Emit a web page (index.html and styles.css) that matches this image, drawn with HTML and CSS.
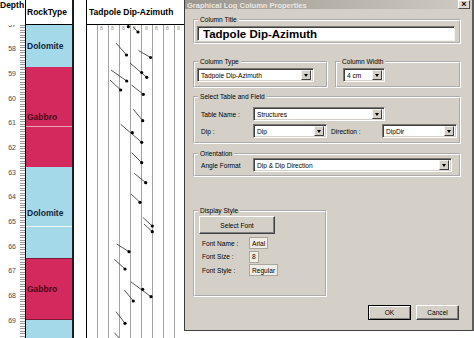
FILE: index.html
```html
<!DOCTYPE html>
<html lang="en">
  <head>
    <meta charset="utf-8" />
    <title>Graphical Log Column Properties</title>
    <link rel="stylesheet" href="styles.css">
  </head>
  <body>
    <div class="log">
      <div class="depth">
        <div class="depth-head">Depth</div>
        <div class="depth-body">
          <div class="depth-labels">
            <span>57</span><span>58</span><span>59</span><span>60</span><span>61</span>
            <span>62</span><span>63</span><span>64</span><span>65</span><span>66</span>
            <span>67</span><span>68</span><span>69</span>
          </div>
          <div class="ticks"></div>
        </div>
      </div>

      <div class="rock">
        <div class="head">RockType</div>
        <div class="unit dolomite unit-a">Dolomite</div>
        <div class="unit gabbro unit-b">Gabbro</div>
        <div class="unit dolomite unit-c">Dolomite</div>
        <div class="unit gabbro unit-d">Gabbro</div>
        <div class="unit dolomite unit-e"></div>
      </div>

      <div class="spacer"></div>

      <div class="tadpole">
        <div class="head">Tadpole Dip-Azimuth</div>
        <svg class="tads" viewBox="87 25 98 313" width="98" height="313">
          <g stroke="#a3a3a3" stroke-width="1">
            <line x1="97.5" y1="25" x2="97.5" y2="338"/>
            <line x1="108.5" y1="25" x2="108.5" y2="338"/>
            <line x1="119.5" y1="25" x2="119.5" y2="338"/>
            <line x1="130.5" y1="25" x2="130.5" y2="338"/>
            <line x1="141.5" y1="25" x2="141.5" y2="338"/>
            <line x1="152.5" y1="25" x2="152.5" y2="338"/>
            <line x1="163.5" y1="25" x2="163.5" y2="338"/>
            <line x1="174.5" y1="25" x2="174.5" y2="338"/>
          </g>
          <g class="grid-marks" fill="#8c8c8c">
            <text x="100" y="30">8</text>
            <text x="111" y="30">8</text>
            <text x="122" y="30">8</text>
            <text x="133" y="30">8</text>
            <text x="145" y="30">8</text>
            <text x="155" y="30">8</text>
            <text x="166" y="30">8</text>
            <text x="177" y="30">8</text>
          </g>
          <g stroke="#2a2a2a" stroke-width="0.8">
            <line x1="133" y1="27" x2="138" y2="32"/>
            <line x1="116" y1="43" x2="126.5" y2="55"/>
            <line x1="138.5" y1="50.5" x2="150.5" y2="57.5"/>
            <line x1="130" y1="63" x2="146.7" y2="77.3"/>
            <line x1="111" y1="70" x2="126.7" y2="81"/>
            <line x1="110" y1="80" x2="120.7" y2="90"/>
            <line x1="131.5" y1="85" x2="143.3" y2="94.3"/>
            <line x1="133.3" y1="109.3" x2="142.7" y2="120.7"/>
            <line x1="120.7" y1="124.3" x2="141.7" y2="142.3"/>
            <line x1="131.7" y1="152.7" x2="141.7" y2="162.7"/>
            <line x1="134.3" y1="173.3" x2="145.7" y2="182.7"/>
            <line x1="131" y1="194" x2="140" y2="202.3"/>
            <line x1="142.7" y1="217.3" x2="152.3" y2="226"/>
            <line x1="144" y1="224" x2="152.3" y2="231.7"/>
            <line x1="116.7" y1="244" x2="129" y2="251.7"/>
            <line x1="114.3" y1="259.3" x2="125" y2="269"/>
            <line x1="130.7" y1="281.7" x2="151" y2="296.7"/>
            <line x1="124.3" y1="290" x2="133.3" y2="301"/>
            <line x1="116" y1="311.7" x2="125" y2="323.3"/>
            <line x1="114.3" y1="332.7" x2="121" y2="340"/>
          </g>
          <g fill="#000">
            <circle cx="128.3" cy="26.7" r="1.6"/>
            <circle cx="138" cy="32" r="1.6"/>
            <circle cx="126.5" cy="55" r="1.6"/>
            <circle cx="150.5" cy="57.5" r="1.6"/>
            <circle cx="141.7" cy="72.5" r="1.6"/>
            <circle cx="146.7" cy="77.3" r="1.6"/>
            <circle cx="126.7" cy="81" r="1.6"/>
            <circle cx="120.7" cy="90" r="1.6"/>
            <circle cx="143.3" cy="94.3" r="1.6"/>
            <circle cx="142.7" cy="120.7" r="1.6"/>
            <circle cx="132.3" cy="132.7" r="1.6"/>
            <circle cx="141.7" cy="142.3" r="1.6"/>
            <circle cx="141.7" cy="162.7" r="1.6"/>
            <circle cx="145.7" cy="182.7" r="1.6"/>
            <circle cx="140" cy="202.3" r="1.6"/>
            <circle cx="152.3" cy="226" r="1.6"/>
            <circle cx="152.3" cy="231.7" r="1.6"/>
            <circle cx="129" cy="251.7" r="1.6"/>
            <circle cx="125" cy="269" r="1.6"/>
            <circle cx="142.7" cy="289.3" r="1.6"/>
            <circle cx="151" cy="296.7" r="1.6"/>
            <circle cx="133.3" cy="301" r="1.6"/>
            <circle cx="125" cy="323.3" r="1.6"/>
          </g>
        </svg>
      </div>
    </div>

    <div class="dialog">
      <div class="titlebar">
        <span class="title">Graphical Log Column Properties</span>
        <span class="close">&times;</span>
      </div>
      <div class="dlg-body">
        <fieldset class="group">
          <legend>Column Title</legend>
          <div class="gbody title-body">
            <div class="textbox">Tadpole Dip-Azimuth</div>
          </div>
        </fieldset>

        <div class="group-row">
          <fieldset class="group col-type">
            <legend>Column Type</legend>
            <div class="gbody type-body">
              <div class="combo combo-type"><span>Tadpole Dip-Azimuth</span><i class="drop"></i></div>
            </div>
          </fieldset>
          <fieldset class="group col-width">
            <legend>Column Width</legend>
            <div class="gbody width-body">
              <div class="combo combo-cm"><span>4 cm</span><i class="drop"></i></div>
            </div>
          </fieldset>
        </div>

        <fieldset class="group table-group">
          <legend>Select Table and Field</legend>
          <div class="gbody table-body">
            <div class="field-row">
              <label class="field-label">Table Name :</label>
              <div class="combo combo-table"><span>Structures</span><i class="drop"></i></div>
            </div>
            <div class="field-row">
              <label class="field-label">Dip :</label>
              <div class="combo combo-dip"><span>Dip</span><i class="drop"></i></div>
              <label class="dir-label">Direction :</label>
              <div class="combo combo-dir"><span>DipDir</span><i class="drop"></i></div>
            </div>
          </div>
        </fieldset>

        <fieldset class="group orient-group">
          <legend>Orientation</legend>
          <div class="gbody orient-body">
            <div class="field-row">
              <label class="field-label">Angle Format</label>
              <div class="combo combo-angle"><span>Dip &amp; Dip Direction</span><i class="drop"></i></div>
            </div>
          </div>
        </fieldset>

        <fieldset class="group display-group">
          <legend>Display Style</legend>
          <div class="gbody display-body">
            <button class="btn font-btn">Select Font</button>
            <div class="font-rows">
              <div class="font-row"><span class="font-label">Font Name :</span><span class="val">Arial</span></div>
              <div class="font-row"><span class="font-label">Font Size :</span><span class="val">8</span></div>
              <div class="font-row"><span class="font-label">Font Style :</span><span class="val">Regular</span></div>
            </div>
          </div>
        </fieldset>

        <div class="buttons">
          <button class="btn ok">OK</button>
          <button class="btn">Cancel</button>
        </div>
      </div>
    </div>
  </body>
</html>
```

FILE: styles.css
```css
* {
  box-sizing: border-box;
}

body {
  margin: 0;
  width: 474px;
  height: 338px;
  overflow: hidden;
  position: relative;
  background: #fff;
  font-family: "Liberation Sans", Arial, sans-serif;
  color: #000;
}

/* ---- log strip ---- */
.log {
  display: flex;
  height: 338px;
}

.depth {
  width: 25px;
  display: flex;
  flex-direction: column;
}

.depth-head {
  height: 25px;
  font-size: 8.5px;
  font-weight: bold;
  line-height: 11px;
}

.depth-body {
  flex: 1;
  display: flex;
  overflow: hidden;
}

.depth-labels {
  width: 20px;
  margin-top: -13px;
  display: flex;
  flex-direction: column;
}

.depth-labels span {
  flex: none;
  height: 24.66px;
  display: flex;
  align-items: center;
  justify-content: flex-end;
  padding-right: 4px;
  font-size: 7px;
  color: #4a4a4a;
}

.ticks {
  width: 5px;
  background: repeating-linear-gradient(to bottom, #9a9a9a 0, #9a9a9a 1px, transparent 1px, transparent 2.466px);
}

.rock {
  width: 49px;
  border-left: 1px solid #000;
  border-right: 2px solid #1c1c1c;
  display: flex;
  flex-direction: column;
  overflow: hidden;
}

.head {
  height: 25px;
  flex: none;
  border-bottom: 1px solid #000;
  display: flex;
  align-items: center;
  padding-left: 1px;
  font-size: 8.5px;
  font-weight: bold;
  white-space: nowrap;
}

.unit {
  flex: none;
  display: flex;
  align-items: center;
  padding-left: 1px;
  font-size: 8.5px;
  font-weight: bold;
}

.dolomite {
  background-color: #a3d9e8;
  color: #10243a;
}

.gabbro {
  background-color: #d4295c;
  color: #4c0719;
}

.unit-a { height: 42px; }

.unit-b {
  height: 100px;
  background-image: linear-gradient(to bottom, transparent 59px, #eba2b7 59px, #eba2b7 60px, transparent 60px);
}

.unit-c {
  height: 91px;
  background-image: linear-gradient(to bottom, transparent 59px, #eef8fb 59px, #eef8fb 60px, transparent 60px);
}

.unit-d {
  height: 62px;
  border-top: 1px solid #7d1838;
  border-bottom: 1px solid #7d1838;
}

.unit-e { flex: 1; }

.spacer {
  width: 12px;
}

.tadpole {
  flex: 1;
  border-left: 1px solid #000;
  display: flex;
  flex-direction: column;
}

.tadpole .head {
  padding-left: 2px;
}

.tads {
  display: block;
}

.grid-marks {
  font-family: "Liberation Sans", sans-serif;
  font-size: 5px;
}

/* ---- dialog ---- */
.dialog {
  position: absolute;
  top: 0;
  left: 184px;
  width: 290px;
  height: 331px;
  background: #d4d0c8;
  border-left: 1px solid #3c3c3c;
  border-right: 2px solid #5c5c5c;
  border-bottom: 1px solid #404040;
  display: flex;
  flex-direction: column;
  font-size: 6.6px;
}

.titlebar {
  height: 9px;
  flex: none;
  display: flex;
  align-items: flex-end;
  justify-content: space-between;
  background: linear-gradient(to right, #9b978f, #cfcbc3);
  overflow: hidden;
}

.title {
  padding-left: 2px;
  font-size: 7.5px;
  font-weight: bold;
  line-height: 9px;
  margin-bottom: -1px;
  color: #ebe8e2;
  white-space: nowrap;
}

.close {
  align-self: flex-start;
  width: 12px;
  height: 9px;
  margin-right: 2px;
  background: #dedad3;
  border: 1px solid;
  border-color: #fff #505050 #505050 #fff;
  font-size: 9px;
  font-weight: bold;
  line-height: 7px;
  text-align: center;
}

.dlg-body {
  flex: 1;
  padding: 7px 11px 0 8px;
  display: flex;
  flex-direction: column;
}

.group {
  margin: 0;
  padding: 0;
  min-width: 0;
  border: 2px groove #fff;
}

.group legend {
  margin-left: 3px;
  padding: 0 2px;
  height: 8px;
  line-height: 8px;
  font-size: 6.6px;
  white-space: nowrap;
}

.title-body {
  padding: 2px 4px 1px 2px;
}

.textbox {
  height: 15px;
  background: #fff;
  border: 1px solid;
  border-color: #7c7972 #f4f2ee #f4f2ee #7c7972;
  box-shadow: inset 1px 1px 0 #404040;
  display: flex;
  align-items: center;
  padding-left: 5px;
  font-size: 11.5px;
  font-weight: bold;
}

.group-row {
  margin-top: 14px;
  display: flex;
  gap: 7px;
}

.col-type {
  width: 135px;
}

.col-width {
  flex: 1;
}

.type-body {
  padding: 2px 2px 4px 2px;
}

.width-body {
  padding: 2px 2px 4px 6px;
}

.combo {
  height: 14px;
  background: #fff;
  border: 1px solid;
  border-color: #7c7972 #fff #fff #7c7972;
  box-shadow: inset 1px 1px 0 #404040, inset -1px -1px 0 #d4d0c8;
  display: flex;
  align-items: center;
  padding: 0 2px 0 3px;
  font-size: 6.6px;
}

.combo span {
  flex: 1;
  white-space: nowrap;
  overflow: hidden;
}

.drop {
  flex: none;
  width: 10px;
  height: 10px;
  background: #d4d0c8;
  border: 1px solid;
  border-color: #f4f2ee #404040 #404040 #f4f2ee;
  display: flex;
  align-items: center;
  justify-content: center;
}

.drop::after {
  content: "";
  border-left: 2.5px solid transparent;
  border-right: 2.5px solid transparent;
  border-top: 3px solid #000;
}

.combo-type { width: 117px; }
.combo-cm { width: 42px; }
.combo-table { width: 132px; }
.combo-dip { width: 74px; }
.combo-dir { width: 75px; }
.combo-angle { width: 199px; }

.table-group {
  margin-top: 5px;
}

.table-body {
  padding: 6px 2px 4px 6px;
  display: flex;
  flex-direction: column;
  gap: 3px;
}

.field-row {
  display: flex;
  align-items: center;
}

.field-label {
  width: 52px;
  flex: none;
}

.dir-label {
  width: 51px;
  margin-left: 4px;
  flex: none;
}

.orient-group {
  margin-top: 6px;
}

.orient-body {
  padding: 0 2px 3px 6px;
}

.display-group {
  margin-top: 30px;
  width: 134px;
}

.display-body {
  padding: 1px 2px 19px 4px;
  display: flex;
  flex-direction: column;
}

.btn {
  width: 43px;
  height: 15px;
  padding: 0;
  background: #d4d0c8;
  border: 1px solid;
  border-color: #fff #404040 #404040 #fff;
  box-shadow: inset -1px -1px 0 #808080;
  font-family: "Liberation Sans", Arial, sans-serif;
  font-size: 6.6px;
  color: #000;
}

.font-btn {
  width: 76px;
  height: 18px;
}

.font-rows {
  margin-top: 3px;
  padding-left: 3px;
  display: flex;
  flex-direction: column;
  gap: 1.5px;
}

.font-row {
  height: 12px;
  display: flex;
  align-items: center;
}

.font-label {
  width: 47px;
  flex: none;
}

.val {
  height: 12px;
  padding: 0 2px;
  background: #efede8;
  border: 1px solid #aaa69e;
  display: flex;
  align-items: center;
}

.buttons {
  margin-top: 8px;
  padding-right: 2px;
  display: flex;
  justify-content: flex-end;
  gap: 5px;
}

.btn.ok {
  border: 1px solid #000;
  box-shadow: inset 1px 1px 0 #fff, inset -1px -1px 0 #808080;
}
```
